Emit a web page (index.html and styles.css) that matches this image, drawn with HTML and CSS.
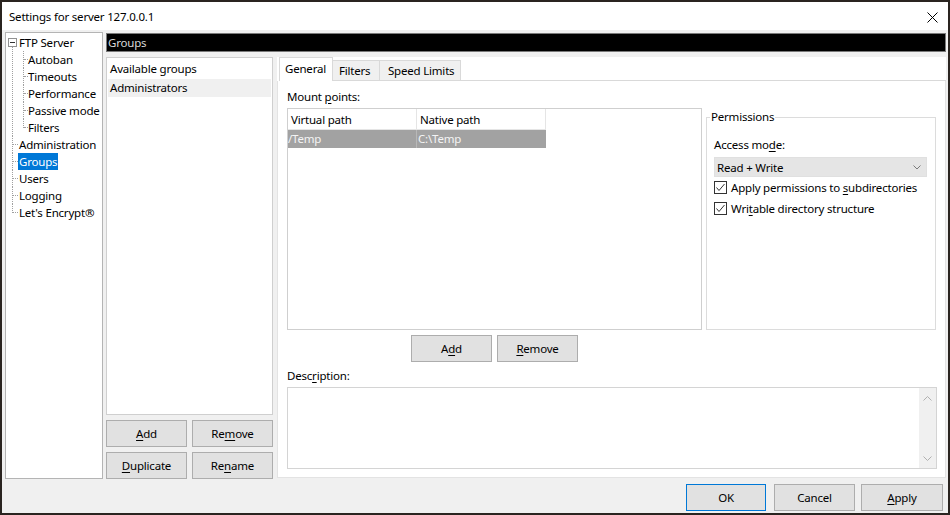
FILE: index.html
```html
<!DOCTYPE html>
<html>
<head>
<meta charset="utf-8">
<title>Settings for server 127.0.0.1</title>
<link rel="stylesheet" href="styles.css">
</head>
<body>
<div class="window">
  <div class="titlebar">
    <span class="title">Settings for server 127.0.0.1</span>
    <svg class="close" width="11" height="11" viewBox="0 0 11 11"><path d="M0.5 0.5 L10.5 10.5 M10.5 0.5 L0.5 10.5" stroke="#000" stroke-width="1" fill="none"/></svg>
  </div>
  <div class="body">
    <div class="main">
      <div class="tree">
        <ul class="tree-root">
          <li class="root"><span class="toggle"></span>FTP Server
            <ul class="children">
              <li>Autoban</li>
              <li>Timeouts</li>
              <li>Performance</li>
              <li>Passive mode</li>
              <li>Filters</li>
            </ul>
          </li>
          <li>Administration</li>
          <li><span class="selected">Groups</span></li>
          <li>Users</li>
          <li>Logging</li>
          <li>Let's Encrypt®</li>
        </ul>
      </div>
      <div class="right">
        <div class="header">Groups</div>
        <div class="content">
          <div class="groups">
            <div class="glist">
              <div class="glist-head">Available groups</div>
              <div class="glist-item">Administrators</div>
            </div>
            <div class="btnrow">
              <button class="btn"><u>A</u>dd</button>
              <button class="btn">Re<u>m</u>ove</button>
            </div>
            <div class="btnrow">
              <button class="btn"><u>D</u>uplicate</button>
              <button class="btn">Re<u>n</u>ame</button>
            </div>
          </div>
          <div class="tabs">
            <div class="tabstrip">
              <div class="tab active">General</div>
              <div class="tab tab-filters">Filters</div>
              <div class="tab tab-speed">Speed Limits</div>
              <div class="tab-fill"></div>
            </div>
            <div class="panel">
              <div class="label">Mount <u>p</u>oints:</div>
              <div class="upper">
                <div class="mounts-col">
                  <div class="mlist">
                    <div class="mrow mhead">
                      <div class="mcell">Virtual path</div>
                      <div class="mcell">Native path</div>
                    </div>
                    <div class="mrow msel">
                      <div class="mcell">/Temp</div>
                      <div class="mcell">C:\Temp</div>
                    </div>
                  </div>
                </div>
                <div class="groupbox">
                  <span class="gb-label">Permissions</span>
                  <div class="gb-text">Access mo<u>d</u>e:</div>
                  <div class="combo">
                    <span>Read + Write</span>
                    <svg width="8" height="5" viewBox="0 0 8 5"><polyline points="0.5,0.5 4,4 7.5,0.5" fill="none" stroke="#7a7a7a" stroke-width="1"/></svg>
                  </div>
                  <div class="check">
                    <span class="box"><svg width="11" height="11" viewBox="0 0 11 11"><polyline points="1.5,5.5 4,8.5 9.5,2" fill="none" stroke="#333" stroke-width="1"/></svg></span>
                    <span>Apply permissions to <u>s</u>ubdirectories</span>
                  </div>
                  <div class="check">
                    <span class="box"><svg width="11" height="11" viewBox="0 0 11 11"><polyline points="1.5,5.5 4,8.5 9.5,2" fill="none" stroke="#333" stroke-width="1"/></svg></span>
                    <span>Wri<u>t</u>able directory structure</span>
                  </div>
                </div>
              </div>
              <div class="mbtns">
                <button class="btn">A<u>d</u>d</button>
                <button class="btn"><u>R</u>emove</button>
              </div>
              <div class="label desc-label">Desc<u>r</u>iption:</div>
              <div class="textarea">
                <div class="ta-body"></div>
                <div class="scrollbar">
                  <svg width="9" height="5" viewBox="0 0 9 5"><polyline points="0.5,4.5 4.5,0.5 8.5,4.5" fill="none" stroke="#b0b0b0" stroke-width="1"/></svg>
                  <svg width="9" height="5" viewBox="0 0 9 5"><polyline points="0.5,0.5 4.5,4.5 8.5,0.5" fill="none" stroke="#b0b0b0" stroke-width="1"/></svg>
                </div>
              </div>
            </div>
          </div>
        </div>
      </div>
    </div>
    <div class="footer">
      <button class="btn default">OK</button>
      <button class="btn">Cancel</button>
      <button class="btn"><u>A</u>pply</button>
    </div>
  </div>
</div>
</body>
</html>
```
FILE: styles.css
```css
* { box-sizing: border-box; }
html, body { margin: 0; padding: 0; }
body {
  background: #2a2420;
  font-family: "Noto Sans", "DejaVu Sans", sans-serif;
  font-size: 11.5px;
  letter-spacing: -0.2px;
  color: #000;
  width: 950px;
  height: 515px;
  overflow: hidden;
  white-space: nowrap;
}
u { text-decoration: underline; text-underline-offset: 2px; }
.window {
  margin: 2px 0 0 2px;
  width: 946px;
  height: 511px;
  background: #f0f0f0;
  display: flex;
  flex-direction: column;
}
.titlebar {
  height: 28px;
  background: #fff;
  display: flex;
  align-items: center;
  justify-content: space-between;
  padding: 0 10px 0 7px;
}
.title { font-size: 11.5px; }
.close { display: block; margin-top: 2px; }
.body {
  flex: 1;
  display: flex;
  flex-direction: column;
  gap: 5px;
  padding: 2px 2px 2px 3px;
}
.main { display: flex; gap: 3px; height: 447px; }

/* tree */
.tree {
  width: 98px;
  background: #fff;
  border: 1px solid #b4b4b4;
  padding-top: 1px;
  overflow: hidden;
}
.tree ul { margin: 0; padding: 0; list-style: none; }
.tree li { position: relative; line-height: 17px; }
.tree-root > li { padding-left: 13px; }
.tree-root > li::before {
  content: ""; position: absolute; left: 7px; top: 8px; width: 5px;
  border-top: 1px dotted #a0a0a0;
}
.tree-root > li::after {
  content: ""; position: absolute; left: 6px; top: 0; bottom: 0;
  border-left: 1px dotted #a0a0a0;
}
.tree-root > li:last-child::after { bottom: auto; height: 9px; }
.tree-root > li.root::before { display: none; }
.tree-root > li.root::after { top: 13px; }
.toggle {
  position: absolute; left: 2px; top: 4px; width: 9px; height: 9px;
  border: 1px solid #919191; background: #fff;
}
.toggle::after {
  content: ""; position: absolute; left: 1px; top: 3px; width: 5px; height: 1px; background: #333;
}
.children li { padding-left: 9px; }
.children li::before {
  content: ""; position: absolute; left: 5px; top: 8px; width: 4px;
  border-top: 1px dotted #a0a0a0;
}
.children li::after {
  content: ""; position: absolute; left: 4px; top: 0; bottom: 0;
  border-left: 1px dotted #a0a0a0;
}
.children li:last-child::after { bottom: auto; height: 9px; }
.selected {
  display: inline-block;
  background: #0078d7;
  color: #fff;
  padding: 0 1px;
  margin-left: -1px;
}

/* right side */
.right { width: 840px; display: flex; flex-direction: column; padding-top: 1px; }
.header {
  height: 19px;
  background: #000;
  color: #d8d8d8;
  border: 1px solid #7a7a7a;
  line-height: 18px;
  padding-left: 1px;
}
.content { flex: 1; display: flex; gap: 4px; margin-top: 5px; }
.groups { width: 167px; display: flex; flex-direction: column; gap: 5px; }
.glist { flex: 1; background: #fff; border: 1px solid #cfcfcf; padding: 0 1px; }
.glist-head { height: 21px; line-height: 22px; padding-left: 2px; }
.glist-item { height: 18px; line-height: 18px; padding-left: 2px; background: #f0f0f0; }
.btnrow { display: flex; gap: 5px; }
.btn {
  width: 81px;
  height: 27px;
  background: #e1e1e1;
  border: 1px solid #adadad;
  font-family: inherit;
  font-size: 11.5px;
  letter-spacing: -0.2px;
  color: #000;
  padding: 0;
  margin: 0;
}
.btn.default { border-color: #0078d7; }

/* tabs */
.tabs { width: 669px; display: flex; flex-direction: column; background: #fff; height: 420px; }
.tabstrip { height: 24px; display: flex; align-items: flex-end; padding-left: 2px; }
.tab {
  height: 21px;
  line-height: 20px;
  background: #f0f0f0;
  border: 1px solid #d9d9d9;
  border-left: none;
}
.tab.active {
  width: 54px;
  height: 24px;
  line-height: 22px;
  background: #fff;
  border: 1px solid #d9d9d9;
  border-bottom: none;
  padding-left: 5px;
}
.tab-filters { width: 47px; padding-left: 6px; }
.tab-speed { width: 81px; padding-left: 8px; }
.tab-fill { flex: 1; height: 1px; background: #d9d9d9; }
.panel {
  flex: 1;
  padding: 8px 8px 8px 9px;
  display: flex;
  flex-direction: column;
  border: 1px solid #e3e3e3;
  border-top: none;
}
.label { line-height: 16px; height: 16px; }
.upper { display: flex; gap: 4px; height: 222px; margin-top: 3px; }
.mounts-col { width: 415px; }
.mlist { height: 222px; border: 1px solid #cfcfcf; background: #fff; }
.mrow { display: flex; }
.mhead { height: 21px; line-height: 21px; }
.mhead .mcell { border-right: 1px solid #e5e5e5; border-bottom: 1px solid #e5e5e5; padding-left: 3px; }
.mcell { width: 129px; }
.msel { height: 18px; line-height: 18px; background: #a2a2a2; color: #f4f4f4; width: 258px; }
.msel .mcell { padding-left: 0; border-right: 1px solid #b8b8b8; }
.msel .mcell:last-child { padding-left: 1px; border-right: none; }

.groupbox {
  width: 230px;
  margin-top: 9px;
  height: 213px;
  border: 1px solid #dcdcdc;
  padding: 0 8px 0 7px;
  display: flex;
  flex-direction: column;
}
.gb-label {
  align-self: flex-start;
  margin: -9px 0 0 -4px;
  line-height: 16px;
  background: #fff;
  padding: 0 1px;
}
.gb-text { line-height: 16px; margin-top: 12px; }
.combo {
  height: 20px;
  margin-top: 4px;
  background: #e5e5e5;
  border: 1px solid #e0e0e0;
  display: flex;
  align-items: center;
  justify-content: space-between;
  padding: 0 5px 0 2px;
}
.check { display: flex; align-items: center; height: 21px; gap: 4px; }
.check:first-of-type { margin-top: 1px; }
.box {
  width: 13px; height: 13px; border: 1px solid #333; background: #fff;
  display: flex; align-items: center; justify-content: center;
  flex: none;
}
.box svg { display: block; }

.mbtns { width: 415px; display: flex; justify-content: center; gap: 5px; margin-top: 5px; }
.desc-label { margin-top: 6px; }
.textarea {
  margin-top: 3px;
  height: 82px;
  border: 1px solid #d4d4d4;
  display: flex;
}
.ta-body { flex: 1; background: #fff; }
.scrollbar {
  width: 17px;
  background: #f0f0f0;
  display: flex;
  flex-direction: column;
  justify-content: space-between;
  align-items: center;
  padding: 8px 0 7px;
}
.scrollbar svg { display: block; }

.footer { display: flex; justify-content: flex-end; gap: 7px; padding-right: 3px; height: 27px; }
.footer .btn:first-child { width: 80px; margin-right: 1px; }
.footer .btn:last-child { width: 82px; margin-left: -1px; }
```
